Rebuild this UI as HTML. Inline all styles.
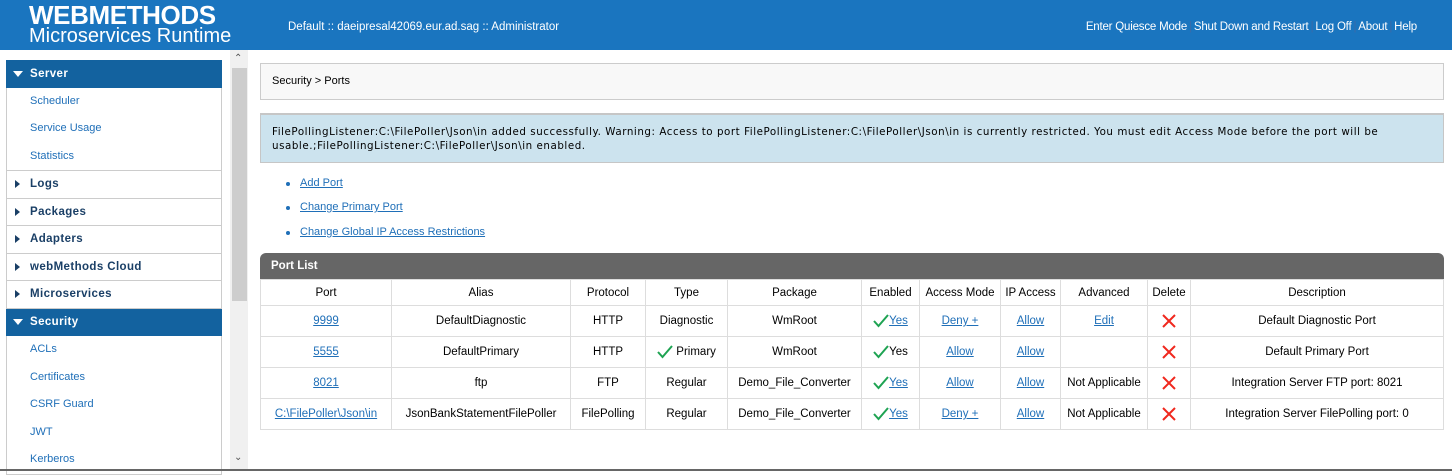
<!DOCTYPE html>
<html><head><style>
*{margin:0;padding:0;box-sizing:border-box}
body{width:1452px;height:471px;overflow:hidden;font-family:"Liberation Sans",sans-serif;font-size:11px;color:#000;background:#fff;position:relative}
.hdr{position:absolute;left:0;top:0;width:1452px;height:50px;background:#1a75bf;color:#fff}
.l1{position:absolute;left:29px;top:0px;font-size:26px;font-weight:bold;letter-spacing:-0.4px}
.l2{position:absolute;left:29px;top:25px;font-size:20px}
.srv{position:absolute;left:288px;top:21px;font-size:11.5px}
.nav{position:absolute;right:35px;top:21px;font-size:11.5px;letter-spacing:-0.2px}
.nav i{color:#3b6aa8;font-style:normal;margin:0 2px}
.side{position:absolute;left:6px;top:60px;width:216px}
.h{height:27.5px;border:1px solid #ccc;border-top:none;font-weight:bold;font-size:11.5px;color:#1a3f66;padding-left:23px;line-height:26px;position:relative;letter-spacing:0.4px}
.h:before{content:"";position:absolute;left:8px;top:9px;border-left:5px solid #1a3f66;border-top:4px solid transparent;border-bottom:4px solid transparent}
.h.o{background:#13629f;color:#fff;border-color:#13629f}
.h.o:before{border-left:5px solid transparent;border-right:5px solid transparent;border-top:6px solid #fff;border-bottom:none;left:6px;top:10px}
.sub{border:1px solid #ccc;border-top:none}
.sub div{height:27.5px;line-height:26px;padding-left:23px;color:#1f6fb8;font-size:11px}
.sb{position:absolute;left:230px;top:50px;width:18px;height:419px;background:#f0f0f0}
.th{position:absolute;left:232px;top:68px;width:15px;height:233px;background:#cdcdcd}
.bc{position:absolute;left:260px;top:63px;width:1184px;height:37px;border:1px solid #ccc;background:#f8f8f8;padding:11px;font-size:11px}
.msg{position:absolute;left:260px;top:113px;width:1184px;height:50px;border:1px solid #c6c6c6;border-width:2px 1px 1px;background:#cce3ee;padding:10px 11px;font-family:"DejaVu Sans",sans-serif;font-size:10.3px;line-height:14px;letter-spacing:0.55px}
.lk{position:absolute;left:300px;color:#1f6fb8;text-decoration:underline;font-size:11px}
.bul{position:absolute;left:286px;width:4px;height:4px;border-radius:50%;background:#1f6fb8}
.pl{position:absolute;left:260px;top:253px;width:1184px;height:27px;background:#666;border-radius:6px 6px 0 0;color:#fff;font-weight:bold;font-size:11.5px;padding:7px 11px}
table{position:absolute;left:260px;top:279px;width:1184px;border-collapse:collapse;font-size:11.5px}
td{border:1px solid #ddd;text-align:center;height:31px;padding:0}
tr.hd td{height:26px}
a{color:#1f6fb8;text-decoration:underline}
svg{vertical-align:middle}
.bl{position:absolute;left:0;top:469px;width:1452px;height:2px;background:#666}
</style></head><body>
<div class="hdr"><div class="l1">WEBMETHODS</div><div class="l2">Microservices Runtime</div>
<div class="srv">Default :: daeipresal42069.eur.ad.sag :: Administrator</div>
<div class="nav">Enter Quiesce Mode<i>|</i>Shut Down and Restart<i>|</i>Log Off<i>|</i>About<i>|</i>Help</div></div>
<div class="side">
<div class="h o" style="border-top:1px solid #13629f">Server</div>
<div class="sub"><div>Scheduler</div><div>Service Usage</div><div>Statistics</div></div>
<div class="h">Logs</div><div class="h">Packages</div><div class="h">Adapters</div><div class="h">webMethods Cloud</div><div class="h">Microservices</div>
<div class="h o">Security</div>
<div class="sub"><div>ACLs</div><div>Certificates</div><div>CSRF Guard</div><div>JWT</div><div>Kerberos</div></div>
</div>
<div class="sb"></div><div class="th"></div>
<div style="position:absolute;left:234px;top:53px;font-size:10px;color:#555">&#8963;</div>
<div style="position:absolute;left:234px;top:452px;font-size:10px;color:#555">&#8964;</div>
<div class="bc">Security &gt; Ports</div>
<div class="msg">FilePollingListener:C:\FilePoller\Json\in added successfully. Warning: Access to port FilePollingListener:C:\FilePoller\Json\in is currently restricted. You must edit Access Mode before the port will be usable.;FilePollingListener:C:\FilePoller\Json\in enabled.</div>
<div class="bul" style="top:182px"></div><a class="lk" style="top:177px">Add Port</a>
<div class="bul" style="top:206px"></div><a class="lk" style="top:201px">Change Primary Port</a>
<div class="bul" style="top:231px"></div><a class="lk" style="top:226px">Change Global IP Access Restrictions</a>
<div class="pl">Port List</div>
<svg width="0" height="0" style="position:absolute"><defs>
<symbol id="ck" viewBox="0 0 16 14"><path d="M1 7 L5.5 12 L15 1" fill="none" stroke="#1ea352" stroke-width="2"/></symbol>
<symbol id="x" viewBox="0 0 14 14"><path d="M1 1L13 13M13 1L1 13" stroke="#f0281e" stroke-width="2"/></symbol></defs></svg>
<table>
<colgroup><col style="width:131px"><col style="width:179px"><col style="width:75px"><col style="width:82px"><col style="width:134px"><col style="width:58px"><col style="width:81px"><col style="width:60px"><col style="width:87px"><col style="width:43px"><col></colgroup>
<tr class="hd"><td>Port</td><td>Alias</td><td>Protocol</td><td>Type</td><td>Package</td><td>Enabled</td><td>Access Mode</td><td>IP Access</td><td>Advanced</td><td>Delete</td><td>Description</td></tr>
<tr><td><a>9999</a></td><td>DefaultDiagnostic</td><td>HTTP</td><td>Diagnostic</td><td>WmRoot</td><td><svg width="16" height="14"><use href="#ck"/></svg><a>Yes</a></td><td><a>Deny +</a></td><td><a>Allow</a></td><td><a>Edit</a></td><td><svg width="14" height="14"><use href="#x"/></svg></td><td>Default Diagnostic Port</td></tr>
<tr><td><a>5555</a></td><td>DefaultPrimary</td><td>HTTP</td><td><svg width="16" height="14"><use href="#ck"/></svg> Primary</td><td>WmRoot</td><td><svg width="16" height="14"><use href="#ck"/></svg>Yes</td><td><a>Allow</a></td><td><a>Allow</a></td><td></td><td><svg width="14" height="14"><use href="#x"/></svg></td><td>Default Primary Port</td></tr>
<tr><td><a>8021</a></td><td>ftp</td><td>FTP</td><td>Regular</td><td>Demo_File_Converter</td><td><svg width="16" height="14"><use href="#ck"/></svg><a>Yes</a></td><td><a>Allow</a></td><td><a>Allow</a></td><td>Not Applicable</td><td><svg width="14" height="14"><use href="#x"/></svg></td><td>Integration Server FTP port: 8021</td></tr>
<tr><td><a>C:\FilePoller\Json\in</a></td><td>JsonBankStatementFilePoller</td><td>FilePolling</td><td>Regular</td><td>Demo_File_Converter</td><td><svg width="16" height="14"><use href="#ck"/></svg><a>Yes</a></td><td><a>Deny +</a></td><td><a>Allow</a></td><td>Not Applicable</td><td><svg width="14" height="14"><use href="#x"/></svg></td><td>Integration Server FilePolling port: 0</td></tr>
</table>
<div class="bl"></div>
</body></html>
